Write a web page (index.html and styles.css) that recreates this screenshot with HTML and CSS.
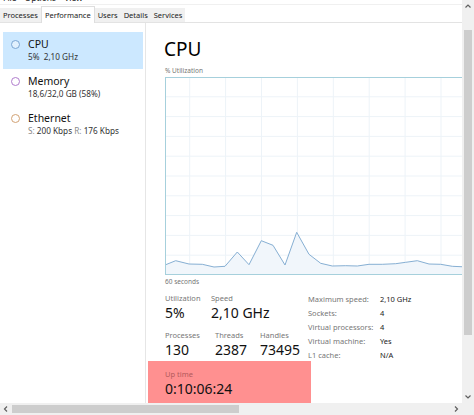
FILE: index.html
```html
<!DOCTYPE html>
<html>
<head>
<meta charset="utf-8">
<link rel="stylesheet" href="styles.css">
</head>
<body>
<div class="window">
  <div class="viewport">
    <div class="menubar"><span>File</span><span>Options</span><span>View</span></div>
    <div class="tabs">
      <div class="tab">Processes</div>
      <div class="tab active">Performance</div>
      <div class="tab">Users</div>
      <div class="tab">Details</div>
      <div class="tab">Services</div>
    </div>
    <div class="main">
      <div class="sidebar">
        <div class="item selected">
          <span class="ring ring-cpu"></span>
          <div class="item-text">
            <div class="item-title">CPU</div>
            <div class="item-sub">5%&nbsp; 2,10 GHz</div>
          </div>
        </div>
        <div class="item">
          <span class="ring ring-mem"></span>
          <div class="item-text">
            <div class="item-title">Memory</div>
            <div class="item-sub">18,6/32,0 GB (58%)</div>
          </div>
        </div>
        <div class="item">
          <span class="ring ring-eth"></span>
          <div class="item-text">
            <div class="item-title">Ethernet</div>
            <div class="item-sub"><span class="dim">S:</span> 200 Kbps <span class="dim">R:</span> 176 Kbps</div>
          </div>
        </div>
      </div>
      <div class="detail">
        <div class="title">CPU</div>
        <div class="caption">% Utilization</div>
        <svg class="graph" width="400" height="198" viewBox="0 0 400 198">
          <g class="grid">
            <line x1="24.7" y1="0" x2="24.7" y2="198"/>
            <line x1="60.6" y1="0" x2="60.6" y2="198"/>
            <line x1="96.5" y1="0" x2="96.5" y2="198"/>
            <line x1="132.4" y1="0" x2="132.4" y2="198"/>
            <line x1="168.3" y1="0" x2="168.3" y2="198"/>
            <line x1="204.2" y1="0" x2="204.2" y2="198"/>
            <line x1="240.1" y1="0" x2="240.1" y2="198"/>
            <line x1="276" y1="0" x2="276" y2="198"/>
            <line x1="311.9" y1="0" x2="311.9" y2="198"/>
            <line x1="347.8" y1="0" x2="347.8" y2="198"/>
            <line x1="0" y1="19.8" x2="400" y2="19.8"/>
            <line x1="0" y1="39.6" x2="400" y2="39.6"/>
            <line x1="0" y1="59.4" x2="400" y2="59.4"/>
            <line x1="0" y1="79.2" x2="400" y2="79.2"/>
            <line x1="0" y1="99" x2="400" y2="99"/>
            <line x1="0" y1="118.8" x2="400" y2="118.8"/>
            <line x1="0" y1="138.6" x2="400" y2="138.6"/>
            <line x1="0" y1="158.4" x2="400" y2="158.4"/>
            <line x1="0" y1="178.2" x2="400" y2="178.2"/>
          </g>
          <path class="area" d="M0,188 L10.7,183.7 L24,187 L37.3,187.3 L49,190 L60,189.3 L72.3,175 L84,187.7 L96.3,163.7 L108,168.3 L120,188 L131.7,155.3 L144,177.3 L155.7,186.3 L167.3,189 L180.7,188.7 L192.3,189 L204,187.3 L217.3,187.3 L230.7,186.7 L240.7,185.3 L252.3,183.7 L264,187 L275.7,187.3 L287.3,189.3 L296,189.7 L310,190 L322,189.5 L334,190 L334,197 L0,197 Z"/>
          <polyline class="line" points="0,188 10.7,183.7 24,187 37.3,187.3 49,190 60,189.3 72.3,175 84,187.7 96.3,163.7 108,168.3 120,188 131.7,155.3 144,177.3 155.7,186.3 167.3,189 180.7,188.7 192.3,189 204,187.3 217.3,187.3 230.7,186.7 240.7,185.3 252.3,183.7 264,187 275.7,187.3 287.3,189.3 296,189.7 310,190 322,189.5 334,190"/>
          <rect class="frame" x="0.5" y="0.5" width="399" height="197"/>
        </svg>
        <div class="caption caption-bottom">60 seconds</div>
        <div class="stats">
          <div class="stats-left">
            <div class="stat-row">
              <div class="stat col-a"><div class="label">Utilization</div><div class="value">5%</div></div>
              <div class="stat"><div class="label">Speed</div><div class="value">2,10 GHz</div></div>
            </div>
            <div class="stat-row">
              <div class="stat col-b"><div class="label">Processes</div><div class="value">130</div></div>
              <div class="stat col-c"><div class="label">Threads</div><div class="value">2387</div></div>
              <div class="stat"><div class="label">Handles</div><div class="value">73495</div></div>
            </div>
          </div>
          <div class="specs">
            <div class="spec-label">Maximum speed:</div><div class="spec-value">2,10 GHz</div>
            <div class="spec-label">Sockets:</div><div class="spec-value">4</div>
            <div class="spec-label">Virtual processors:</div><div class="spec-value">4</div>
            <div class="spec-label">Virtual machine:</div><div class="spec-value">Yes</div>
            <div class="spec-label">L1 cache:</div><div class="spec-value">N/A</div>
          </div>
        </div>
        <div class="uptime">
          <div class="label uptime-label">Up time</div>
          <div class="value">0:10:06:24</div>
        </div>
      </div>
    </div>
  </div>
  <div class="vscroll">
    <div class="arrow"><svg width="12" height="12" viewBox="0 0 12 12"><polyline points="3.5,7.5 6,5 8.5,7.5"/></svg></div>
    <div class="vgap"></div>
    <div class="vthumb"></div>
    <div class="vtrack"></div>
    <div class="arrow"><svg width="12" height="12" viewBox="0 0 12 12"><polyline points="3.5,4.5 6,7 8.5,4.5"/></svg></div>
  </div>
  <div class="hscroll">
    <div class="arrow"><svg width="12" height="12" viewBox="0 0 12 12"><polyline points="7,3.5 4.5,6 7,8.5"/></svg></div>
    <div class="hthumb"></div>
    <div class="htrack"></div>
    <div class="arrow"><svg width="12" height="12" viewBox="0 0 12 12"><polyline points="5,3.5 7.5,6 5,8.5"/></svg></div>
  </div>
  <div class="corner"></div>
</div>
</body>
</html>
```

FILE: styles.css
```css
html, body {
  margin: 0;
  padding: 0;
  background: #ffffff;
}

body {
  font-family: "Noto Sans", "Open Sans", sans-serif;
  color: #000;
}

.window {
  width: 474px;
  height: 415px;
  display: grid;
  grid-template-columns: 462px 12px;
  grid-template-rows: 403px 12px;
  overflow: hidden;
}

.viewport {
  overflow: hidden;
  display: flex;
  flex-direction: column;
  background: #fff;
}

/* menu bar (scrolled mostly out of view) */
.menubar {
  height: 4px;
  flex: none;
  overflow: hidden;
  display: flex;
  gap: 8px;
  padding-left: 3px;
  border-bottom: 1px solid #f0f0f0;
  font-size: 8.5px;
  line-height: 12px;
  color: #222;
}
.menubar span {
  margin-top: -8px;
}

/* tabs */
.tabs {
  height: 17px;
  flex: none;
  display: flex;
  align-items: flex-end;
  border-bottom: 1px solid #e3e3e3;
  background: #fff;
}
.tab {
  height: 14px;
  line-height: 14px;
  padding: 0 3px;
  font-size: 7.5px;
  color: #1a1a1a;
  background: #f0f0f0;
}
.tab.active {
  background: #fff;
  padding: 0 3px;
  border-left: 1px solid #dedede;
  border-right: 1px solid #dedede;
  border-top: 1px solid #dedede;
  box-sizing: border-box;
  margin-bottom: -1px;
  height: 17px;
  line-height: 16px;
}

.main {
  flex: 1;
  display: flex;
  min-height: 0;
}

/* sidebar */
.sidebar {
  width: 146px;
  flex: none;
  box-sizing: border-box;
  padding: 9px 2px 0 3px;
  border-right: 1px solid #e6e6e6;
}
.item {
  height: 37px;
  box-sizing: border-box;
  display: flex;
  align-items: flex-start;
  padding: 5px 0 0 8px;
}
.item.selected {
  background: #cce8ff;
}
.ring {
  width: 9px;
  height: 9px;
  box-sizing: border-box;
  border-radius: 50%;
  border: 1.4px solid #6f9fd0;
  margin: 3px 8px 0 0;
  flex: none;
}
.ring-cpu { border-color: #7ba6d3; background: #e1f0fd; }
.ring-mem { border-color: #b07ccd; }
.ring-eth { border-color: #d2a274; }
.item-title {
  font-size: 10.5px;
  line-height: 14px;
  color: #111;
}
.item-sub {
  font-size: 8.2px;
  line-height: 12px;
  color: #333;
}
.item-sub .dim {
  color: #8a8a8a;
}

/* detail pane */
.detail {
  flex: 1;
  min-width: 0;
  padding: 13px 0 0 19px;
  display: flex;
  flex-direction: column;
}
.title {
  font-size: 19px;
  line-height: 26px;
  margin-left: -1px;
  color: #000;
}
.caption {
  font-size: 6.5px;
  line-height: 9px;
  color: #767676;
  margin-top: 4px;
}
.caption-bottom {
  margin-top: 2px;
}
.graph {
  display: block;
  margin-top: 2px;
  flex: none;
}
.graph .grid line {
  stroke: #edf3f8;
  stroke-width: 1;
}
.graph .area {
  fill: #f1f6fb;
}
.graph .line {
  fill: none;
  stroke: #86afd3;
  stroke-width: 1;
}
.graph .frame {
  fill: none;
  stroke: #a6d0dc;
  stroke-width: 1;
}

.stats {
  display: flex;
  margin-top: 7px;
}
.stats-left {
  width: 143px;
  flex: none;
  display: flex;
  flex-direction: column;
  gap: 7px;
}
.stat-row {
  display: flex;
}
.col-a { width: 46px; }
.col-b { width: 50px; }
.col-c { width: 45px; }
.label {
  font-size: 7.5px;
  line-height: 10px;
  color: #777;
}
.value {
  font-size: 14px;
  line-height: 20px;
  color: #111;
}

.specs {
  display: grid;
  grid-template-columns: 72px auto;
  grid-auto-rows: 14px;
  align-items: center;
  margin-top: -1px;
  font-size: 7.5px;
}
.spec-label { color: #777; }
.spec-value { color: #222; }

.uptime {
  margin-left: -17px;
  width: 163px;
  flex: 1;
  background: #ff9090;
  box-sizing: border-box;
  padding: 8px 0 0 17px;
  margin-top: -1px;
}
.uptime-label {
  color: #b35a5c;
}

/* scrollbars */
.vscroll {
  background: #f0f0f0;
  display: flex;
  flex-direction: column;
}
.arrow {
  width: 12px;
  height: 12px;
  flex: none;
}
.arrow svg {
  display: block;
}
.arrow polyline {
  fill: none;
  stroke: #606060;
  stroke-width: 1.2;
}
.vgap { height: 18px; flex: none; }
.vthumb {
  height: 305px;
  flex: none;
  margin: 0 2px;
  background: #cdcdcd;
}
.vtrack { flex: 1; }

.hscroll {
  background: #f0f0f0;
  display: flex;
}
.hthumb {
  width: 227px;
  flex: none;
  margin: 2px 0;
  background: #cdcdcd;
}
.htrack { flex: 1; }

.corner {
  background: #f0f0f0;
}
```
